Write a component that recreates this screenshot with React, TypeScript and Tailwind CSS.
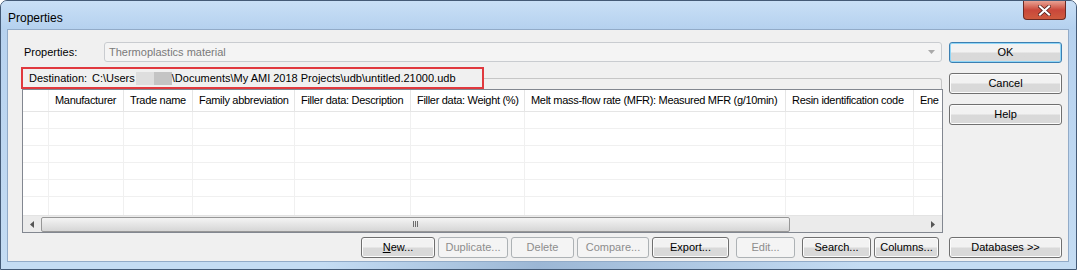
import React from 'react'

const font = { fontFamily: '"Liberation Sans", Arial, sans-serif' }

const columns = [
  { label: 'Manufacturer', w: 'w-[75px]' },
  { label: 'Trade name', w: 'w-[69px]' },
  { label: 'Family abbreviation', w: 'w-[102px]' },
  { label: 'Filler data: Description', w: 'w-[116px]' },
  { label: 'Filler data: Weight (%)', w: 'w-[114px]' },
  { label: 'Melt mass-flow rate (MFR): Measured MFR (g/10min)', w: 'w-[261px]' },
  { label: 'Resin identification code', w: 'w-[128px]' },
  { label: 'Ene', w: 'w-[60px]' },
]

function Button({
  children,
  w,
  disabled,
  primary,
}: {
  children: React.ReactNode
  w: string
  disabled?: boolean
  primary?: boolean
}) {
  if (disabled) {
    return (
      <div
        className={`${w} h-[21px] shrink-0 rounded-[3px] border border-[#adb2b5] bg-[#f4f4f4] flex items-center justify-center text-[11px] text-[#8d8d8d]`}
      >
        {children}
      </div>
    )
  }
  return (
    <div
      className={`${w} h-[21px] shrink-0 rounded-[3px] border ${
        primary ? 'border-[#3c7fb1] shadow-[inset_0_0_0_1px_#8fd6f7]' : 'border-[#707070] shadow-[inset_0_0_0_1px_#fcfcfc]'
      } bg-gradient-to-b from-[#f2f2f2] from-45% to-[#d9d9d9] to-55% flex items-center justify-center text-[11px] text-black`}
    >
      {children}
    </div>
  )
}

function GridRow({ header }: { header?: boolean }) {
  return (
    <div className={`flex shrink-0 ${header ? 'h-[22px] border-b border-[#e5e5e5]' : 'h-[17px] border-b border-[#f0f0f0]'}`}>
      <div className="w-[26px] shrink-0 border-r border-[#f0f0f0]" />
      {columns.map((c) => (
        <div
          key={c.label}
          className={`${c.w} shrink-0 border-r ${header ? 'border-[#e5e5e5]' : 'border-[#f0f0f0]'} flex items-center pl-[6px] overflow-hidden whitespace-nowrap text-[11px] tracking-[-0.3px] text-black`}
        >
          {header ? c.label : null}
        </div>
      ))}
    </div>
  )
}

export default function App() {
  return (
    <div
      style={font}
      className="w-[1077px] h-[270px] flex flex-col overflow-hidden rounded-t-[7px] border border-[#445a76] bg-[#bdd6f0]"
    >
      {/* title bar */}
      <div className="h-[28px] shrink-0 flex items-start justify-between bg-gradient-to-b from-[#c9dff6] to-[#b5d1ef]">
        <span className="ml-[7px] mt-[8px] text-[12px] text-black">Properties</span>
        <div className="mr-[10px] w-[43px] h-[19px] rounded-b-[4px] border border-t-0 border-[#6b2a24] bg-gradient-to-b from-[#e8a294] via-[#c9473a] to-[#cf5a3e] flex items-center justify-center">
          <svg width="13" height="11" viewBox="0 0 13 11">
            <path d="M2 1.5 L11 9.5 M11 1.5 L2 9.5" stroke="#4a1c18" strokeWidth="3.6" strokeLinecap="square" />
            <path d="M2 1.5 L11 9.5 M11 1.5 L2 9.5" stroke="#ffffff" strokeWidth="2.2" strokeLinecap="square" />
          </svg>
        </div>
      </div>

      <div className="flex flex-1 min-h-0">
        <div className="w-[6px] shrink-0 bg-gradient-to-b from-[#b7d2ef] to-[#c4dcf3]" />
        {/* client */}
        <div className="flex-1 flex bg-[#f0f0f0] border border-[#92abc8] pl-[13px] pr-[6px] pt-[12px]">
          {/* left column */}
          <div className="w-[922px] shrink-0 flex flex-col">
            <div className="flex items-center h-[20px]">
              <span className="w-[83px] shrink-0 pl-[3px] text-[11px] text-black">Properties:</span>
              <div className="flex-1 mr-[1px] h-[20px] rounded-[3px] border border-[#c9ccd0] bg-[#f4f4f4] flex items-center justify-between pl-[4px] pr-[6px]">
                <span className="text-[11px] text-[#7a7a7a]">Thermoplastics material</span>
                <svg width="7" height="4" viewBox="0 0 7 4">
                  <path d="M0 0 L7 0 L3.5 4 Z" fill="#a9a9a9" />
                </svg>
              </div>
            </div>

            <div className="flex h-[22px] mt-[5px]">
              <div className="w-[463px] shrink-0 border-2 border-[#e0393e] flex items-center text-[11px] text-black">
                <span className="pl-[6px] w-[69px] shrink-0">Destination:</span>
                <span>C:\Users</span>
                <span className="ml-[1px] w-[18px] h-[13px] bg-[#dedede]" />
                <span className="w-[18px] h-[13px] bg-[#c4c4c4]" />
                <span>\Documents\My AMI 2018 Projects\udb\untitled.21000.udb</span>
              </div>
              <div className="flex-1 mt-[11px] mr-[1px] border-t border-r border-[#c6c6c6] rounded-tr-[3px]" />
            </div>

            {/* grid */}
            <div className="ml-[1px] h-[144px] border border-[#828790] bg-white flex flex-col overflow-hidden">
              <GridRow header />
              <GridRow />
              <GridRow />
              <GridRow />
              <GridRow />
              <GridRow />
              <div className="flex-1 flex">
                <div className="w-[26px] shrink-0 border-r border-[#f0f0f0]" />
                {columns.map((c) => (
                  <div key={c.label} className={`${c.w} shrink-0 border-r border-[#f0f0f0]`} />
                ))}
              </div>
              {/* scrollbar */}
              <div className="h-[17px] shrink-0 flex items-center bg-[#ebebeb] border-t border-[#e3e3e3]">
                <div className="w-[18px] shrink-0 flex items-center justify-center">
                  <svg width="4" height="7" viewBox="0 0 4 7">
                    <path d="M4 0 L0 3.5 L4 7 Z" fill="#555" />
                  </svg>
                </div>
                <div className="w-[749px] h-[15px] shrink-0 rounded-[2px] border border-[#979797] bg-gradient-to-b from-[#f4f4f4] to-[#d6d6d6] flex items-center justify-center">
                  <svg width="6" height="6" viewBox="0 0 6 6">
                    <path d="M0.5 0 V6 M2.5 0 V6 M4.5 0 V6" stroke="#6d6d6d" strokeWidth="1" />
                  </svg>
                </div>
                <div className="flex-1" />
                <div className="w-[18px] shrink-0 flex items-center justify-center">
                  <svg width="4" height="7" viewBox="0 0 4 7">
                    <path d="M0 0 L4 3.5 L0 7 Z" fill="#555" />
                  </svg>
                </div>
              </div>
            </div>

            <div className="flex justify-end mt-[4px] pr-[4px] gap-[3px]">
              <Button w="w-[74px]">
                <span>
                  <span className="underline">N</span>ew...
                </span>
              </Button>
              <Button w="w-[70px]" disabled>Duplicate...</Button>
              <Button w="w-[63px]" disabled>Delete</Button>
              <Button w="w-[72px]" disabled>Compare...</Button>
              <Button w="w-[77px]">Export...</Button>
              <div className="w-[1px]" />
              <Button w="w-[59px]" disabled>Edit...</Button>
              <div className="w-[1px]" />
              <Button w="w-[69px]">Search...</Button>
              <Button w="w-[65px]">Columns...</Button>
            </div>
          </div>

          {/* right column */}
          <div className="ml-[6px] w-[113px] shrink-0 flex flex-col">
            <div className="flex flex-col gap-[10px]">
              <Button w="w-[113px]" primary>OK</Button>
              <Button w="w-[113px]">Cancel</Button>
              <Button w="w-[113px]">Help</Button>
            </div>
            <div className="mt-[112px]">
              <Button w="w-[113px]">Databases &gt;&gt;</Button>
            </div>
          </div>
        </div>
        <div className="w-[7px] shrink-0 bg-gradient-to-b from-[#b7d2ef] to-[#c4dcf3]" />
      </div>

      <div className="h-[7px] shrink-0 bg-gradient-to-r from-[#c4dcf3] from-30% via-[#9cb7d5] via-50% to-[#c4dcf3] to-80%" />
    </div>
  )
}
